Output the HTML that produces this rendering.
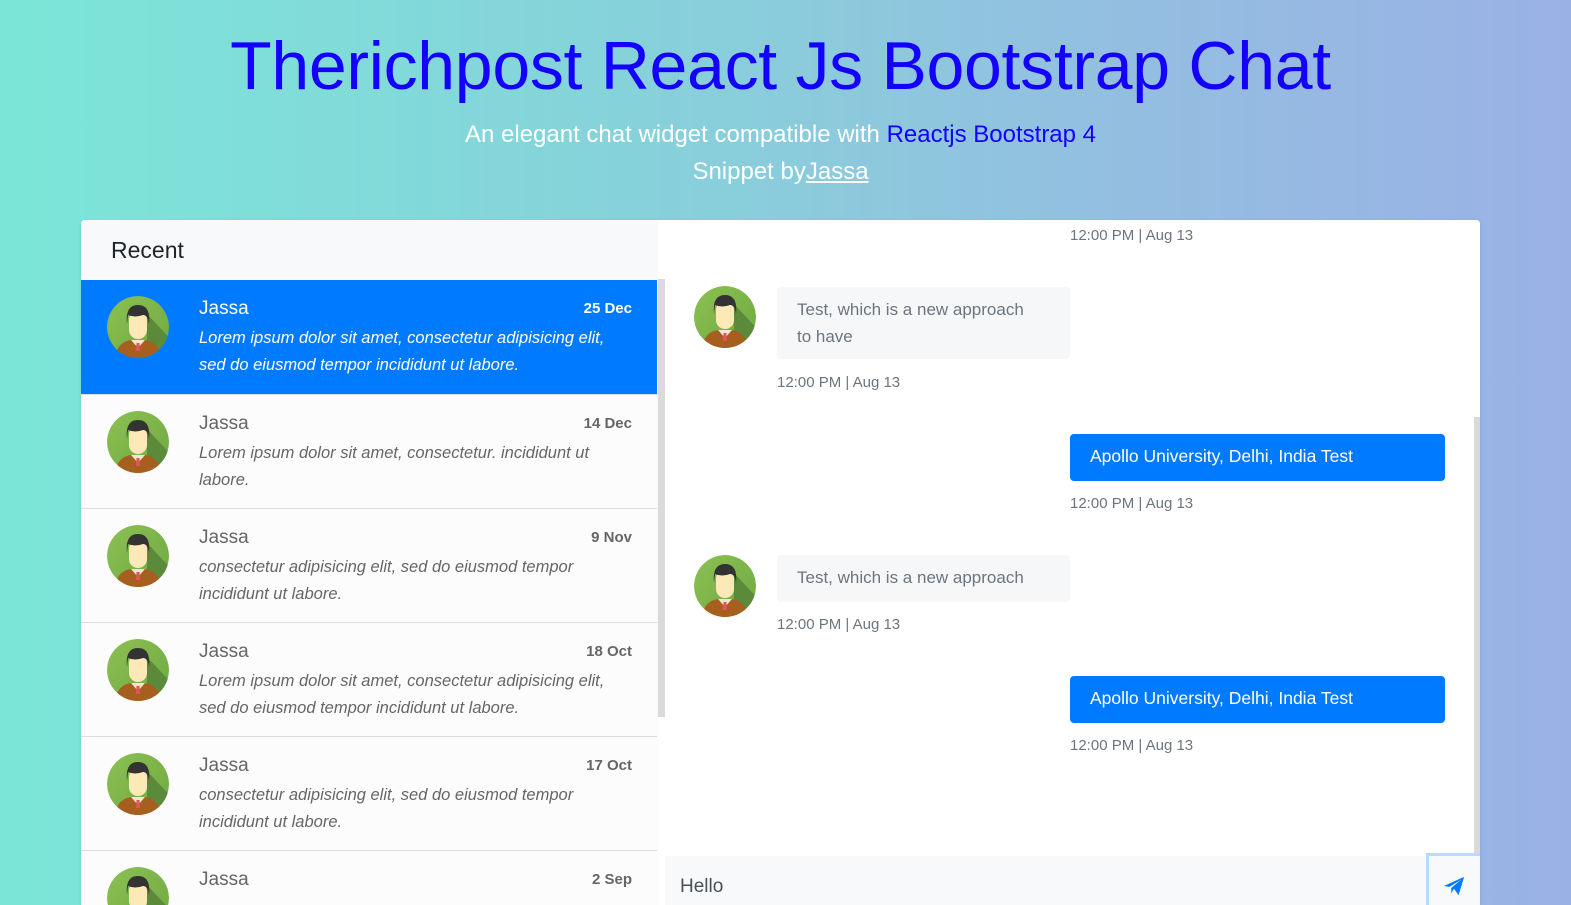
<!DOCTYPE html>
<html><head><meta charset="utf-8"><style>
*{box-sizing:border-box;margin:0;padding:0}
html,body{width:1571px;height:905px;overflow:hidden}
body{font-family:"Liberation Sans",sans-serif;background:linear-gradient(90deg,#7be6d8 0%,#86d2da 40%,#93bfe0 70%,#9ab1e6 100%);position:relative}
.a{position:absolute}
h1{position:absolute;left:0;width:1561px;top:27px;text-align:center;font-weight:normal;font-size:68px;color:#1500ff;letter-spacing:-0.3px}
.sub{position:absolute;left:0;width:1561px;text-align:center;color:#fff;font-size:24px;font-weight:300}
.sub a{color:#1500ff;text-decoration:none}
.box{position:absolute;left:81px;top:220px;width:1399px;height:685px;background:#fff;border-radius:4px 4px 0 0;overflow:hidden;box-shadow:0 1px 3px rgba(0,0,0,.1)}
.left{position:absolute;left:0;top:0;width:577px;height:685px;background:#f8f9fa}
.recent{position:absolute;left:30px;top:17px;font-size:23px;color:#212529}
.item{position:absolute;left:0;width:576px;height:114px;background:#fcfcfc;border-bottom:1px solid #ddd;color:#666}
.item.act{background:#007bff;color:#fff}
.item .av{position:absolute;left:26px;top:16px}
.item .nm{position:absolute;left:118px;top:18px;font-size:19px}
.item .dt{position:absolute;right:25px;top:20px;font-size:15px;font-weight:bold}
.item .ms{position:absolute;left:118px;top:45px;width:434px;font-size:16.5px;font-style:italic;line-height:27px}
.sb{position:absolute;left:577px;top:59px;width:7px;height:438px;background:#dadada}
.right{position:absolute;left:584px;top:0;width:815px;height:685px;background:#fff}
.time{position:absolute;font-size:15px;color:#6c757d}
.in{position:absolute;left:112px;width:293px;background:#f6f7f9;border-radius:4px;color:#6c757d;font-size:17px;line-height:27px;padding:9px 36px 9px 20px}
.out{position:absolute;left:405px;width:375px;height:47px;background:#007bff;border-radius:4px;color:#fff;font-size:17.5px;padding:12px 20px}
</style></head><body>
<h1>Therichpost React Js Bootstrap Chat</h1>
<div class="sub" style="top:121px">An elegant chat widget compatible with <a>Reactjs Bootstrap 4</a></div>
<div class="sub" style="top:158px">Snippet by<u>Jassa</u></div>
<svg width="0" height="0" style="position:absolute"><defs>
<clipPath id="c"><circle cx="31" cy="31" r="31"/></clipPath>
<linearGradient id="g" x1="0" y1="0" x2="1" y2="1"><stop offset="0" stop-color="#8cc152"/><stop offset="1" stop-color="#6fa843"/></linearGradient>
<symbol id="av" viewBox="0 0 62 62"><g clip-path="url(#c)"><circle cx="31" cy="31" r="31" fill="url(#g)"/><path d="M40 18 L70 50 L40 70 Z" fill="#5a8a3a"/><path d="M8 62 Q10 46 24 44 L38 44 Q52 46 54 62Z" fill="#a65f1f"/><path d="M24 44 L31 52 L38 44Z" fill="#f2e6d0"/><path d="M29.5 47 L32.5 47 L33 55 L29 55Z" fill="#e0565b"/><rect x="22" y="15" width="18" height="28" rx="9" fill="#fde8b8"/><path d="M20 28 Q18 9 31 9 Q44 9 42 28 Q41 19 36 19 Q28 22 21 19Z" fill="#333"/></g></symbol>
</defs></svg>
<div class="box">
<div class="left">
<div class="recent">Recent</div>
<div class="item act" style="top:60px;height:115px"><svg class="av" width="62" height="62"><use href="#av"/></svg><div class="nm">Jassa</div><div class="dt">25 Dec</div><div class="ms">Lorem ipsum dolor sit amet, consectetur adipisicing elit, sed do eiusmod tempor incididunt ut labore.</div></div>
<div class="item" style="top:175px"><svg class="av" width="62" height="62"><use href="#av"/></svg><div class="nm">Jassa</div><div class="dt">14 Dec</div><div class="ms">Lorem ipsum dolor sit amet, consectetur. incididunt ut labore.</div></div>
<div class="item" style="top:289px"><svg class="av" width="62" height="62"><use href="#av"/></svg><div class="nm">Jassa</div><div class="dt">9 Nov</div><div class="ms">consectetur adipisicing elit, sed do eiusmod tempor incididunt ut labore.</div></div>
<div class="item" style="top:403px"><svg class="av" width="62" height="62"><use href="#av"/></svg><div class="nm">Jassa</div><div class="dt">18 Oct</div><div class="ms">Lorem ipsum dolor sit amet, consectetur adipisicing elit, sed do eiusmod tempor incididunt ut labore.</div></div>
<div class="item" style="top:517px"><svg class="av" width="62" height="62"><use href="#av"/></svg><div class="nm">Jassa</div><div class="dt">17 Oct</div><div class="ms">consectetur adipisicing elit, sed do eiusmod tempor incididunt ut labore.</div></div>
<div class="item" style="top:631px"><svg class="av" width="62" height="62"><use href="#av"/></svg><div class="nm">Jassa</div><div class="dt">2 Sep</div></div>
</div>
<div class="sb"></div>
<div class="right">
<div class="time" style="left:405px;top:7px">12:00 PM | Aug 13</div>
<svg class="a" style="left:29px;top:66px" width="62" height="62"><use href="#av"/></svg>
<div class="in" style="top:67px">Test, which is a new approach to have</div>
<div class="time" style="left:112px;top:154px">12:00 PM | Aug 13</div>
<div class="out" style="top:214px">Apollo University, Delhi, India Test</div>
<div class="time" style="left:405px;top:275px">12:00 PM | Aug 13</div>
<svg class="a" style="left:29px;top:335px" width="62" height="62"><use href="#av"/></svg>
<div class="in" style="top:335px;height:47px">Test, which is a new approach</div>
<div class="time" style="left:112px;top:396px">12:00 PM | Aug 13</div>
<div class="out" style="top:456px">Apollo University, Delhi, India Test</div>
<div class="time" style="left:405px;top:517px">12:00 PM | Aug 13</div>
<div class="a" style="left:809px;top:197px;width:6px;height:440px;background:#dadada"></div>
<div class="a" style="left:0;top:636px;width:815px;height:60px;background:#f8f9fa"></div>
<div class="a" style="left:15px;top:656px;font-size:19px;color:#495057">Hello</div>
<div class="a" style="left:761px;top:633px;width:54px;height:60px;border:3px solid #b9dafd;border-right:none;background:#f8f9fa"></div>
<svg class="a" style="left:778px;top:655px" width="22" height="22" viewBox="0 0 24 24"><path d="M1 12 L23 2 L17 22 L12 15 L9 20 L9 14 L20 5 L7 13Z" fill="#007bff"/></svg>
</div>
</div>
</body></html>
